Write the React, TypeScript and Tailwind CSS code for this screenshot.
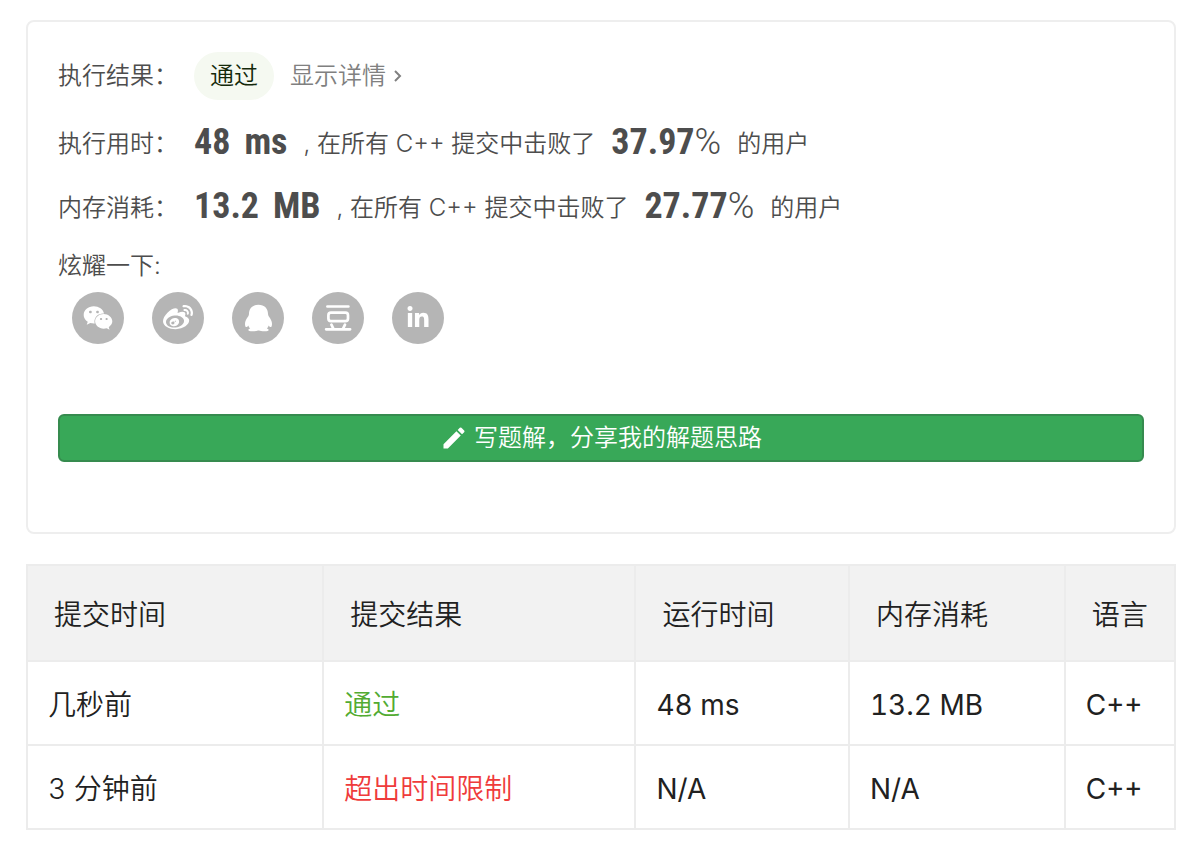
import type { ReactNode } from "react";
import { FaLinkedinIn, FaWeibo, FaWeixin } from "react-icons/fa";
import { MdEdit } from "react-icons/md";

type Stat = { label: string; value: string; unit: string; percent: string };

const stats: Stat[] = [
  { label: "执行用时：", value: "48", unit: "ms", percent: "37.97" },
  { label: "内存消耗：", value: "13.2", unit: "MB", percent: "27.77" },
];

function QqIcon() {
  return (
    <svg viewBox="0 0 28 28" className="size-7" fill="currentColor" aria-hidden="true">
      <path d="M14.500.700C8.500.700 5 4.600 5 9.800c0 1-.2 1.800-.7 2.500C2.200 15 1 17.500 1 20c0 1.900.6 3.100 1.200 3.100.7 0 1.500-.8 2.100-1.700.4 1.200 1 2.200 1.900 3-1.200.4-1.900.9-1.900 1.600 0 .9 1.500 1.300 4.300 1.300 2.500 0 4.300-.3 5.400-.8h1c1.100.5 2.900.8 5.400.8 2.800 0 4.300-.4 4.300-1.300 0-.7-.7-1.200-1.900-1.600.9-.8 1.500-1.800 1.900-3 .6.900 1.400 1.700 2.100 1.700.6 0 1.200-1.200 1.200-3.100 0-2.500-1.200-5-3.300-7.700-.5-.7-.7-1.500-.7-2.500 0-5.200-3.500-9.100-9.500-9.100z" />
    </svg>
  );
}

function DoubanIcon() {
  return (
    <svg viewBox="0 0 28 28" className="size-7" fill="none" stroke="currentColor" strokeWidth="2.7" strokeLinecap="round" aria-hidden="true">
      <path d="M3.400 2.500h21M2.100 25.300h24M7.400 20.600l1.900 4M21 20.600l-1.900 4" />
      <rect x="4.400" y="8.600" width="19.600" height="8.500" rx="2.600" />
    </svg>
  );
}

const shares: { name: string; icon: ReactNode }[] = [
  { name: "微信", icon: <FaWeixin className="size-[30px]" /> },
  { name: "微博", icon: <FaWeibo className="size-[30px]" /> },
  { name: "QQ", icon: <QqIcon /> },
  { name: "豆瓣", icon: <DoubanIcon /> },
  { name: "LinkedIn", icon: <FaLinkedinIn className="size-6" /> },
];

const submissions = [
  { time: "几秒前", result: "通过", passed: true, runtime: "48 ms", memory: "13.2 MB", language: "C++" },
  { time: "3 分钟前", result: "超出时间限制", passed: false, runtime: "N/A", memory: "N/A", language: "C++" },
];

const columns = [
  { title: "提交时间", width: "w-[25.8%]" },
  { title: "提交结果", width: "w-[27.2%]" },
  { title: "运行时间", width: "w-[18.6%]" },
  { title: "内存消耗", width: "w-[18.8%]" },
  { title: "语言", width: "w-[9.6%]" },
];

function StatRow({ label, value, unit, percent }: Stat) {
  return (
    <div className="flex h-16 items-center whitespace-pre">
      <span className="w-[136px]">{label}</span>
      <strong className="flex gap-3.5 pb-1 font-['Roboto_Condensed',Roboto,sans-serif] text-4xl font-bold">
        <span>{value}</span>
        <span>{unit}</span>
      </strong>
      <span className="ml-4">, 在所有 C++ 提交中击败了</span>
      <span className="ml-4 pb-1 font-[Roboto,sans-serif] text-4xl font-light">
        <strong className="font-['Roboto_Condensed',Roboto,sans-serif] font-bold">{percent}</strong>%
      </span>
      <span className="ml-4">的用户</span>
    </div>
  );
}

function ResultCard() {
  return (
    <section className="rounded-lg border-2 border-[#eeeeee] px-[30px] pt-[30px] pb-[70px] text-2xl font-[350] text-[#4d4d4d]">
      <div className="mb-3 flex h-12 items-center">
        <span className="w-[136px]">执行结果：</span>
        <span className="rounded-full bg-[#f5f9f1] px-4 leading-[48px] text-[#14290a]">通过</span>
        <a href="#detail" className="ml-4 flex items-center gap-2 text-[#808080]">
          显示详情
          <svg viewBox="0 0 8 12" className="h-3 w-2" fill="none" stroke="currentColor" strokeWidth="2" aria-hidden="true">
            <path d="M1 1l5 5-5 5" />
          </svg>
        </a>
      </div>
      {stats.map((stat) => (
        <StatRow key={stat.label} {...stat} />
      ))}
      <div className="mt-2 leading-9">炫耀一下:</div>
      <div className="mt-2 flex gap-7 px-3.5">
        {shares.map((share) => (
          <button
            key={share.name}
            type="button"
            aria-label={share.name}
            className="flex size-[52px] items-center justify-center rounded-full bg-[#b5b5b5] text-white"
          >
            {share.icon}
          </button>
        ))}
      </div>
      <button
        type="button"
        className="mt-[70px] flex h-12 w-full items-center justify-center gap-1.5 rounded-md border-2 border-[#368b4f] bg-[#38a858] text-white"
      >
        <MdEdit className="size-7" aria-hidden="true" />
        写题解，分享我的解题思路
      </button>
    </section>
  );
}

function SubmissionTable() {
  return (
    <table className="mt-[30px] w-full table-fixed border-collapse text-left text-[28px] leading-10 text-[#212121] tabular-nums">
      <thead className="bg-[#f2f2f2]">
        <tr className="h-24">
          {columns.map((column) => (
            <th key={column.title} className={`${column.width} border-2 border-[#ececec] pt-1 pl-[26px] font-[350] whitespace-nowrap`}>
              {column.title}
            </th>
          ))}
        </tr>
      </thead>
      <tbody>
        {submissions.map((row) => (
          <tr key={row.time} className="h-[84px] font-[350] *:border-2 *:border-[#ececec] *:pt-1 *:pl-5">
            <td>{row.time}</td>
            <td>
              <a href="#submission" className={row.passed ? "text-[#52ab32]" : "text-[#ef3b3b]"}>
                {row.result}
              </a>
            </td>
            <td className="font-normal">{row.runtime}</td>
            <td className="font-normal">{row.memory}</td>
            <td className="font-normal">{row.language}</td>
          </tr>
        ))}
      </tbody>
    </table>
  );
}

export default function App() {
  return (
    <main className="bg-white pt-5 pr-[18px] pb-[18px] pl-[26px] font-[Inter,'Noto_Sans_CJK_SC',sans-serif]">
      <ResultCard />
      <SubmissionTable />
    </main>
  );
}
